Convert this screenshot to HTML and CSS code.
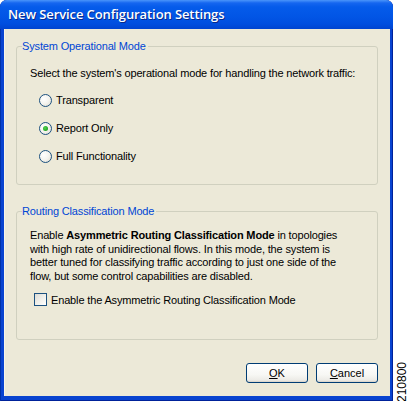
FILE: index.html
```html
<!DOCTYPE html>
<html>
<head>
<meta charset="utf-8">
<link rel="stylesheet" href="styles.css">
</head>
<body>
<div class="page">
  <div class="window">
    <div class="titlebar"><span class="title">New Service Configuration Settings</span></div>
    <div class="client">
      <fieldset class="group group-mode">
        <legend>System Operational Mode</legend>
        <div class="intro">Select the system's operational mode for handling the network traffic:</div>
        <div class="radios">
          <label class="radio-row"><span class="radio"></span>Transparent</label>
          <label class="radio-row"><span class="radio checked"></span>Report Only</label>
          <label class="radio-row"><span class="radio"></span>Full Functionality</label>
        </div>
      </fieldset>
      <fieldset class="group group-routing">
        <legend>Routing Classification Mode</legend>
        <p class="desc">Enable <b>Asymmetric Routing Classification Mode</b> in topologies with high rate of unidirectional flows. In this mode, the system is better tuned for classifying traffic according to just one side of the flow, but some control capabilities are disabled.</p>
        <label class="check-row"><span class="checkbox"></span>Enable the Asymmetric Routing Classification Mode</label>
      </fieldset>
      <div class="buttons">
        <button class="btn"><u>O</u>K</button>
        <button class="btn"><u>C</u>ancel</button>
      </div>
    </div>
  </div>
  <div class="stamp">210800</div>
</div>
</body>
</html>
```

FILE: styles.css
```css
html, body {
  margin: 0;
  padding: 0;
  background: #ffffff;
}
body {
  font-family: "Liberation Sans", Arial, sans-serif;
  font-size: 11px;
  color: #000;
}
.page {
  display: flex;
  align-items: flex-start;
  width: 408px;
  height: 401px;
  overflow: hidden;
}
.window {
  width: 393px;
  height: 401px;
  box-sizing: border-box;
  display: flex;
  flex-direction: column;
  background: #0843D0;
  border-radius: 7px 7px 0 0;
  padding: 0 3px 5px 4px;
  box-shadow: inset 1px 0 0 #0031A8, inset -1px 0 0 #00229A, inset 0 -1px 0 #00229A;
  flex-shrink: 0;
}
.titlebar {
  height: 29px;
  margin: 0 -3px 0 -4px;
  border-radius: 7px 7px 0 0;
  background: linear-gradient(#4A95FA 0px, #1566F0 3px, #055BEA 7px, #0256E6 16px, #004EDF 24px, #0044D0 29px);
  display: flex;
  align-items: center;
  padding-left: 8px;
  padding-bottom: 1px;
  box-sizing: border-box;
}
.title {
  color: #fff;
  font-family: "Open Sans", "DejaVu Sans", sans-serif;
  font-weight: 600;
  font-size: 13px;
  text-shadow: 1px 1px 0 #0A2A8A;
  letter-spacing: -0.1px;
}
.client {
  flex: 1;
  background: #ECE9D8;
  padding: 10px 12px 0 12px;
  display: flex;
  flex-direction: column;
  box-shadow: inset 1px 0 0 #F6F4EA;
  letter-spacing: -0.15px;
}
.group {
  margin: 0;
  padding: 0 0 0 13px;
  border: 1px solid #D0D0BF;
  border-radius: 3px;
  min-width: 0;
}
.group legend {
  color: #0046D5;
  padding: 0 2px 0 0;
  margin-left: -8px;
  line-height: 14px;
  height: 14px;
}
.group-mode {
  padding-bottom: 21px;
}
.intro {
  margin-top: 13px;
  line-height: 14px;
  white-space: nowrap;
}
.radios {
  display: flex;
  flex-direction: column;
  gap: 14px;
  margin-top: 13px;
  padding-left: 9px;
}
.radio-row, .check-row {
  display: flex;
  align-items: center;
  height: 14px;
  line-height: 14px;
  gap: 4px;
}
.radio {
  width: 11px;
  height: 11px;
  border: 1px solid #1C5180;
  border-radius: 50%;
  background: radial-gradient(circle at 35% 35%, #ffffff 0%, #F4F3EE 50%, #DCD9CC 100%);
  position: relative;
  flex-shrink: 0;
}
.radio.checked::after {
  content: "";
  position: absolute;
  left: 3px;
  top: 3px;
  width: 5px;
  height: 5px;
  border-radius: 50%;
  background: radial-gradient(circle at 40% 40%, #55D451 0%, #21A121 70%, #1A8A1A 100%);
}
.group-routing {
  margin-top: 19px;
  padding-bottom: 32px;
}
.desc {
  margin: 11px 0 0 0;
  line-height: 13.7px;
  padding-right: 18px;
}
.check-row {
  margin-top: 9px;
  padding-left: 4px;
  gap: 4px;
}
.checkbox {
  width: 11px;
  height: 11px;
  border: 1px solid #1C5180;
  background: linear-gradient(135deg, #DCDBD4 0%, #F0EFEA 50%, #FFFFFF 100%);
  flex-shrink: 0;
}
.buttons {
  display: flex;
  justify-content: flex-end;
  gap: 8px;
  margin-top: 23px;
}
.btn {
  width: 62px;
  height: 20px;
  box-sizing: border-box;
  border: 1px solid #003C74;
  border-radius: 3px;
  background: linear-gradient(#FFFFFF 0%, #F7F7F4 60%, #ECEBE6 90%, #D6D0C5 100%);
  font-family: "Liberation Sans", Arial, sans-serif;
  font-size: 11px;
  color: #000;
  padding: 0;
  line-height: 18px;
}
.stamp {
  writing-mode: vertical-rl;
  transform: rotate(180deg);
  font-family: "Liberation Sans", Arial, sans-serif;
  font-size: 12px;
  line-height: 12px;
  margin-left: 3px;
  margin-top: 362px;
  white-space: nowrap;
}
```
